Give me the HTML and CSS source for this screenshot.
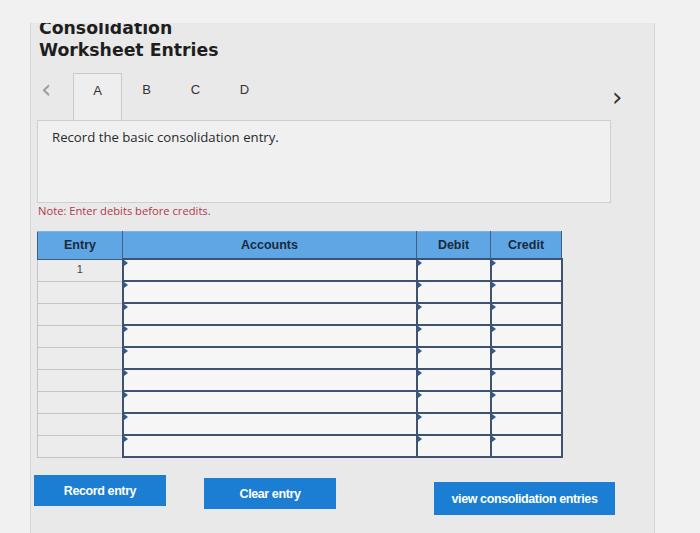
FILE: index.html
```html
<!DOCTYPE html>
<html>
<head>
<meta charset="utf-8">
<link rel="stylesheet" href="styles.css">
</head>
<body>
<div class="page">
  <div class="panel">
    <h1 class="title"><span class="cut">Consolidation</span><span>Worksheet Entries</span></h1>
    <div class="tabs">
      <span class="arrow left">&lsaquo;</span>
      <span class="tab active">A</span>
      <span class="tab">B</span>
      <span class="tab">C</span>
      <span class="tab">D</span>
      <span class="spacer"></span>
      <span class="arrow right">&rsaquo;</span>
    </div>
    <div class="question">Record the basic consolidation entry.</div>
    <div class="note">Note: Enter debits before credits.</div>
    <table class="grid">
      <thead>
        <tr><th class="c-entry">Entry</th><th class="c-acc">Accounts</th><th class="c-deb">Debit</th><th class="c-cred">Credit</th></tr>
      </thead>
      <tbody>
        <tr><td class="entry">1</td><td class="in"></td><td class="in"></td><td class="in"></td></tr>
        <tr><td class="entry"></td><td class="in"></td><td class="in"></td><td class="in"></td></tr>
        <tr><td class="entry"></td><td class="in"></td><td class="in"></td><td class="in"></td></tr>
        <tr><td class="entry"></td><td class="in"></td><td class="in"></td><td class="in"></td></tr>
        <tr><td class="entry"></td><td class="in"></td><td class="in"></td><td class="in"></td></tr>
        <tr><td class="entry"></td><td class="in"></td><td class="in"></td><td class="in"></td></tr>
        <tr><td class="entry"></td><td class="in"></td><td class="in"></td><td class="in"></td></tr>
        <tr><td class="entry"></td><td class="in"></td><td class="in"></td><td class="in"></td></tr>
        <tr><td class="entry"></td><td class="in"></td><td class="in"></td><td class="in"></td></tr>
      </tbody>
    </table>
    <div class="buttons">
      <button class="btn b1">Record entry</button>
      <button class="btn b2">Clear entry</button>
      <button class="btn b3">view consolidation entries</button>
    </div>
  </div>
</div>
</body>
</html>
```
FILE: styles.css
```css
html, body {
  margin: 0;
  padding: 0;
  background: #f1f1f1;
  width: 700px;
  height: 533px;
  overflow: hidden;
}
.page {
  padding: 23px 0 0 30px;
}
.panel {
  width: 625px;
  height: 510px;
  background: #e9e9e9;
  border-left: 1px solid #d6d6d6;
  border-right: 1px solid #d6d6d6;
  overflow: hidden;
  padding-left: 6px;
  box-sizing: border-box;
  font-family: "DejaVu Sans", Verdana, sans-serif;
}
.title {
  margin: -6px 0 0 2px;
  font-size: 17.3px;
  font-weight: bold;
  color: #1e1e1e;
  line-height: 22px;
  display: flex;
  flex-direction: column;
}
.tabs {
  display: flex;
  align-items: flex-start;
  margin-top: 12px;
  height: 47px;
  font-family: "Liberation Sans", Arial, sans-serif;
  font-size: 13px;
  color: #333;
}
.arrow {
  font-size: 26px;
  line-height: 20px;
  font-family: "DejaVu Sans", sans-serif;
}
.arrow.left {
  color: #9a9a9a;
  margin: 6px 0 0 4px;
  width: 32px;
}
.arrow.right {
  color: #333;
  margin: 14px 0 0 0;
  width: 42px;
}
.tab {
  width: 49px;
  text-align: center;
  padding-top: 9px;
}
.tab.active {
  height: 47px;
  box-sizing: border-box;
  background: #eeeeee;
  border: 1px solid #c9c9c9;
  border-bottom: none;
}
.spacer { flex: 1; }
.question {
  width: 574px;
  height: 83px;
  box-sizing: border-box;
  background: #f0f0f0;
  border: 1px solid #cfcfcf;
  padding: 7px 0 0 14px;
  font-family: "Open Sans", sans-serif;
  font-size: 13.2px;
  color: #2a2a2a;
}
.note {
  margin: 1px 0 0 1px;
  font-family: "Open Sans", sans-serif;
  font-size: 11.2px;
  color: #b03a4a;
  height: 22px;
  line-height: 14px;
}
.grid {
  border-collapse: collapse;
  width: 520px;
  margin-top: 5px;
  table-layout: fixed;
}
.grid th {
  background: #5ea6e4;
  height: 26px;
  font-family: "Liberation Sans", Arial, sans-serif;
  font-weight: bold;
  font-size: 12.5px;
  color: #1c2a3a;
  border: 1px solid #3e5f82;
  border-top-color: #7ab4e8;
  padding: 0;
}
.c-entry { width: 84px; }
.c-acc { width: 293px; }
.c-deb { width: 73px; }
.c-cred { width: 70px; }
.grid td {
  height: 20px;
  padding: 0;
}
.grid td.entry {
  background: #ececec;
  border: 1px solid #c4c4c4;
  text-align: center;
  font-family: "Liberation Sans", Arial, sans-serif;
  font-size: 11px;
  color: #444;
  vertical-align: top;
  padding-top: 3px;
  height: 17px;
}
.grid td.in {
  background: #f6f6f6;
  border: 2px solid #3f5271;
  position: relative;
}
.grid td.in::before {
  content: "";
  position: absolute;
  left: 0;
  top: 0;
  border-left: 4px solid #2d5b8e;
  border-top: 3px solid transparent;
  border-bottom: 3px solid transparent;
}
.buttons {
  display: flex;
  align-items: flex-start;
  margin-top: 17px;
}
.btn {
  background: #1c7ed2;
  color: #fff;
  border: none;
  font-family: "Liberation Sans", Arial, sans-serif;
  font-weight: bold;
  font-size: 12.5px;
  letter-spacing: -0.4px;
  padding: 0;
  height: 31px;
}
.b1 { width: 132px; margin-left: -3px; }
.b2 { width: 132px; margin-left: 38px; margin-top: 3px; }
.b3 { width: 181px; margin-left: 98px; margin-top: 7px; height: 33px; }
```
